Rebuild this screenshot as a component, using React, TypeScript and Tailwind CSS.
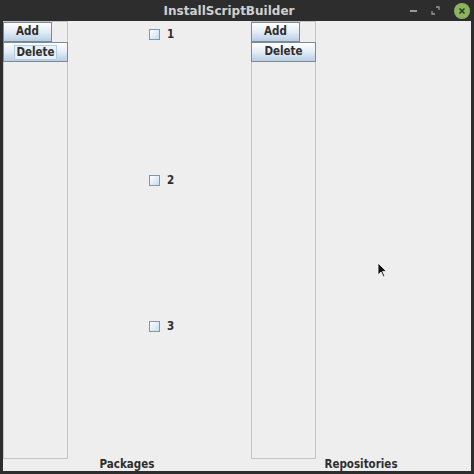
const font = { fontFamily: '"DejaVu Sans", "Liberation Sans", sans-serif' };
const narrow = { fontFamily: '"DejaVu Sans Condensed", "DejaVu Sans", "Liberation Sans", sans-serif' };

const JButton = ({ label, width, focused }: { label: string; width: string; focused?: boolean }) => (
  <div
    className={`${width} h-[20px] flex items-center justify-center border border-[#7a8a99] bg-gradient-to-b from-[#ffffff] via-[#e3ecf6] to-[#b9cfe4] text-[11.5px] font-bold text-[#2e2e2e]`}
    style={narrow}
  >
    {focused ? (
      <span className="px-[1px] leading-[13px] border border-[#b6cce2] bg-[#e8f0f8]">{label}</span>
    ) : (
      <span>{label}</span>
    )}
  </div>
);

const ListPanel = ({ focused }: { focused?: boolean }) => (
  <div className="w-[65px] h-[438px] border border-[#c4c4c4] flex flex-col items-start">
    <div className="-ml-px flex flex-col items-start">
      <JButton label="Add" width="w-[49px]" />
      <JButton label="Delete" width="w-[65px]" focused={focused} />
    </div>
  </div>
);

const Check = ({ n }: { n: string }) => (
  <div className="flex items-center gap-[7px] pt-[5px] pl-[4px]">
    <div className="w-[11px] h-[11px] border border-[#7f98b2] bg-gradient-to-br from-[#ffffff] to-[#c9dbec]" />
    <span className="text-[11.5px] font-bold text-[#2e2e2e]" style={narrow}>{n}</span>
  </div>
);

export default function App() {
  return (
    <div className="w-[474px] h-[474px] bg-[#2d2d2d] flex flex-col" style={font}>
      <div className="h-[21px] flex items-center relative">
        <div className="flex-1 text-center text-[12px] font-bold text-[#d0d0d0] pr-[16px]">InstallScriptBuilder</div>
        <div className="absolute right-[4px] top-0 h-[21px] flex items-center gap-[14px]">
          <div className="w-[7px] h-[2px] bg-[#9a9a9a]" />
          <svg width="9" height="9" viewBox="0 0 9 9">
            <path d="M5 1h3v3M4 8H1V5" fill="none" stroke="#9a9a9a" strokeWidth="1.3" />
          </svg>
          <div className="w-[16px] h-[16px] rounded-full bg-[#8ab55e] flex items-center justify-center">
            <svg width="8" height="8" viewBox="0 0 8 8">
              <path d="M1.5 1.5l5 5M6.5 1.5l-5 5" stroke="#2d3a22" strokeWidth="1.6" />
            </svg>
          </div>
        </div>
      </div>
      <div className="flex-1 ml-[3px] mr-[3px] mb-[3px] bg-[#eeeeee] flex relative">
        <div className="w-[248px] flex flex-col">
          <div className="flex">
            <ListPanel focused />
            <div className="flex-1 grid grid-rows-3 items-start justify-items-center">
              <Check n="1" />
              <Check n="2" />
              <Check n="3" />
            </div>
          </div>
          <div
            className="flex-1 flex items-center justify-center text-[11.5px] font-bold text-[#2e2e2e] leading-none"
            style={narrow}
          >
            Packages
          </div>
        </div>
        <div className="flex-1 flex flex-col">
          <div className="flex">
            <ListPanel />
          </div>
          <div
            className="flex-1 flex items-center justify-center text-[11.5px] font-bold text-[#2e2e2e] leading-none"
            style={narrow}
          >
            Repositories
          </div>
        </div>
        <svg className="absolute left-[374px] top-[241px]" width="10" height="16" viewBox="0 0 10 16">
          <path d="M1 1v12l3-3 2.5 5 1.5-.8-2.4-4.8H9.5z" fill="#111111" stroke="#ffffff" strokeWidth="0.8" />
        </svg>
      </div>
    </div>
  );
}
